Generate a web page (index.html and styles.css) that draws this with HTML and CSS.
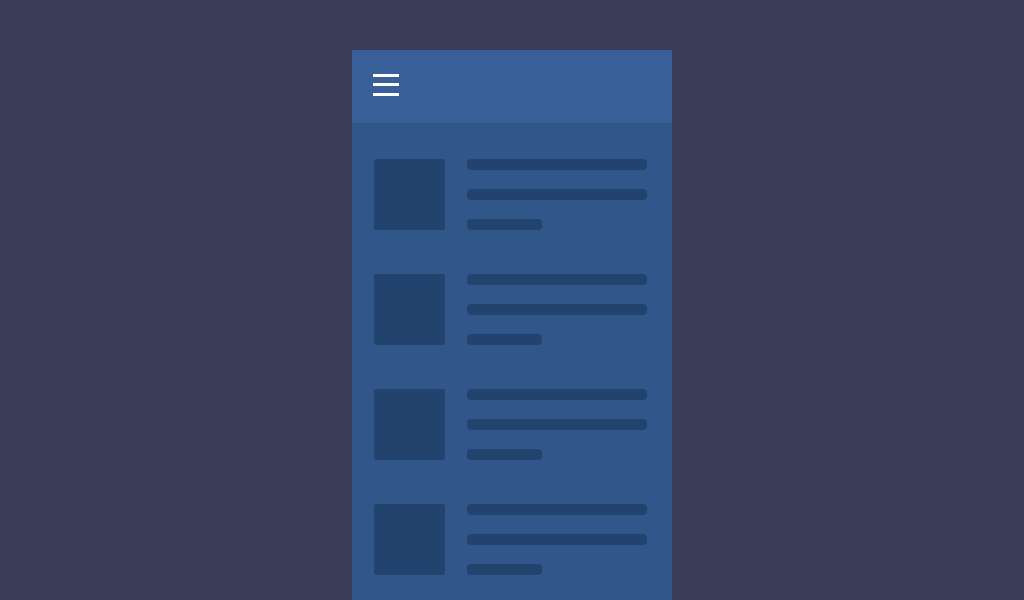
FILE: index.html
```html
<!DOCTYPE html>
<html>
<head>
<meta charset="utf-8">
<link rel="stylesheet" href="styles.css">
</head>
<body>
<div class="panel">
  <header class="header">
    <div class="burger"><span></span><span></span><span></span></div>
  </header>
  <main class="list">
    <div class="item"><div class="thumb"></div><div class="lines"><div class="line"></div><div class="line"></div><div class="line short"></div></div></div>
    <div class="item"><div class="thumb"></div><div class="lines"><div class="line"></div><div class="line"></div><div class="line short"></div></div></div>
    <div class="item"><div class="thumb"></div><div class="lines"><div class="line"></div><div class="line"></div><div class="line short"></div></div></div>
    <div class="item"><div class="thumb"></div><div class="lines"><div class="line"></div><div class="line"></div><div class="line short"></div></div></div>
  </main>
</div>
</body>
</html>
```
FILE: styles.css
```css
html, body {
  margin: 0;
  padding: 0;
  height: 100%;
  overflow: hidden;
  background: #3a3d58;
  font-family: "Liberation Sans", sans-serif;
}
body {
  padding-top: 50px;
  box-sizing: border-box;
}
.panel {
  width: 320px;
  margin: 0 auto;
  height: 100%;
  overflow: hidden;
  background: #31568a;
}
.header {
  height: 73px;
  background: #385f98;
  display: flex;
  align-items: flex-start;
  padding: 24px 0 0 21px;
  box-sizing: border-box;
}
.burger {
  display: flex;
  flex-direction: column;
  width: 26px;
}
.burger span {
  display: block;
  height: 3px;
  background: #ffffff;
  margin-bottom: 6px;
}
.burger span:nth-child(2) {
  margin-bottom: 7px;
}
.list {
  padding: 36px 25px 0 22px;
  display: flex;
  flex-direction: column;
  gap: 44px;
}
.item {
  display: flex;
  gap: 22px;
}
.thumb {
  width: 71px;
  height: 71px;
  border-radius: 3px;
  background: #23436f;
}
.lines {
  display: flex;
  flex-direction: column;
  gap: 19px;
  width: 180px;
}
.line {
  height: 11px;
  border-radius: 4px;
  background: #23436f;
}
.line.short {
  width: 75px;
}
```
